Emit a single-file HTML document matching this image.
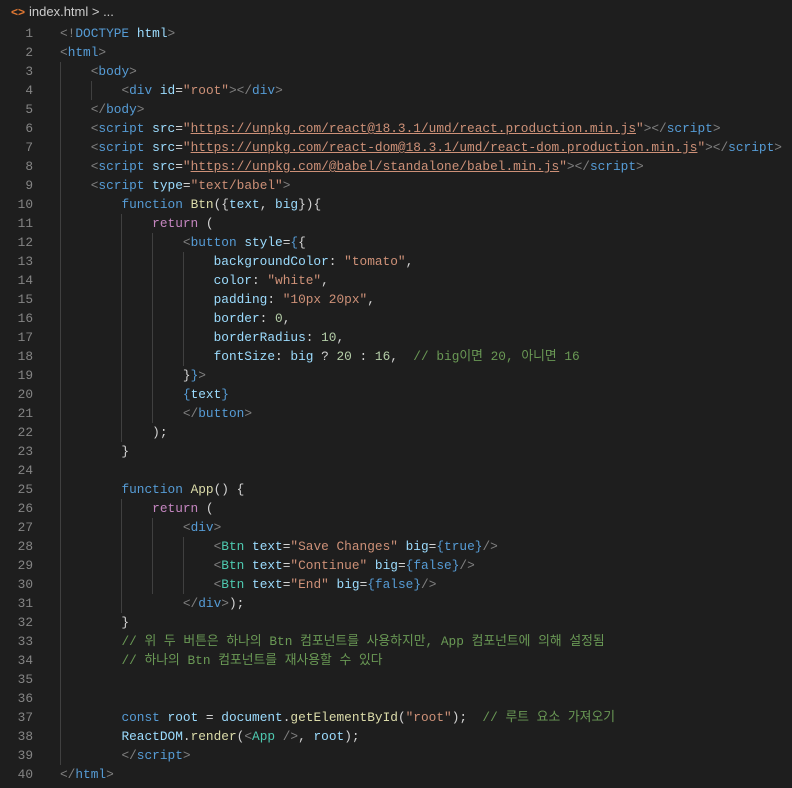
<!DOCTYPE html>
<html><head><meta charset="utf-8"><style>
body{margin:0;background:#1e1e1e;width:792px;height:788px;overflow:hidden;position:relative;font-family:"Liberation Mono","Noto Sans CJK KR",monospace;font-size:12.8px;color:#d4d4d4}
.bc{position:absolute;left:0;top:0;height:24px;width:792px;font-family:"Liberation Sans",sans-serif;font-size:13px;color:#cccccc;line-height:24px}
.ln{position:absolute;left:0;width:33px;text-align:right;color:#858585;height:19px;line-height:19px}
.cd{position:absolute;left:60px;height:19px;line-height:19px;white-space:pre}
.g{position:absolute;width:1px;background:#404040}
.t{color:#569cd6}.p{color:#808080}.a{color:#9cdcfe}.s{color:#ce9178}.k{color:#c586c0}.f{color:#dcdcaa}.v{color:#9cdcfe}.c{color:#6a9955}.n{color:#b5cea8}.j{color:#4ec9b0}
.u{text-decoration:underline;text-decoration-color:#ce9178}
</style></head><body>
<div class="bc"><span style="position:absolute;left:11px;color:#e37933;font-weight:bold;font-size:12px">&lt;&gt;</span><span style="position:absolute;left:29px">index.html &gt; ...</span></div>
<div class="g" style="left:60px;top:62px;height:703px"></div>
<div class="g" style="left:91px;top:81px;height:19px"></div>
<div class="g" style="left:121px;top:214px;height:228px"></div>
<div class="g" style="left:152px;top:233px;height:190px"></div>
<div class="g" style="left:183px;top:252px;height:114px"></div>
<div class="g" style="left:121px;top:499px;height:114px"></div>
<div class="g" style="left:152px;top:518px;height:76px"></div>
<div class="g" style="left:183px;top:537px;height:57px"></div>
<div id="L"></div>
<script></script>
<div class="ln" style="top:24px">1</div><div class="cd" style="top:24px"><span class="p">&lt;!</span><span class="t">DOCTYPE</span> <span class="a">html</span><span class="p">&gt;</span></div>
<div class="ln" style="top:43px">2</div><div class="cd" style="top:43px"><span class="p">&lt;</span><span class="t">html</span><span class="p">&gt;</span></div>
<div class="ln" style="top:62px">3</div><div class="cd" style="top:62px">    <span class="p">&lt;</span><span class="t">body</span><span class="p">&gt;</span></div>
<div class="ln" style="top:81px">4</div><div class="cd" style="top:81px">        <span class="p">&lt;</span><span class="t">div</span> <span class="a">id</span>=<span class="s">"root"</span><span class="p">&gt;&lt;/</span><span class="t">div</span><span class="p">&gt;</span></div>
<div class="ln" style="top:100px">5</div><div class="cd" style="top:100px">    <span class="p">&lt;/</span><span class="t">body</span><span class="p">&gt;</span></div>
<div class="ln" style="top:119px">6</div><div class="cd" style="top:119px">    <span class="p">&lt;</span><span class="t">script</span> <span class="a">src</span>=<span class="s">"<span class="u">https://unpkg.com/react@18.3.1/umd/react.production.min.js</span>"</span><span class="p">&gt;&lt;/</span><span class="t">script</span><span class="p">&gt;</span></div>
<div class="ln" style="top:138px">7</div><div class="cd" style="top:138px">    <span class="p">&lt;</span><span class="t">script</span> <span class="a">src</span>=<span class="s">"<span class="u">https://unpkg.com/react-dom@18.3.1/umd/react-dom.production.min.js</span>"</span><span class="p">&gt;&lt;/</span><span class="t">script</span><span class="p">&gt;</span></div>
<div class="ln" style="top:157px">8</div><div class="cd" style="top:157px">    <span class="p">&lt;</span><span class="t">script</span> <span class="a">src</span>=<span class="s">"<span class="u">https://unpkg.com/@babel/standalone/babel.min.js</span>"</span><span class="p">&gt;&lt;/</span><span class="t">script</span><span class="p">&gt;</span></div>
<div class="ln" style="top:176px">9</div><div class="cd" style="top:176px">    <span class="p">&lt;</span><span class="t">script</span> <span class="a">type</span>=<span class="s">"text/babel"</span><span class="p">&gt;</span></div>
<div class="ln" style="top:195px">10</div><div class="cd" style="top:195px">        <span class="t">function</span> <span class="f">Btn</span>({<span class="v">text</span>, <span class="v">big</span>}){</div>
<div class="ln" style="top:214px">11</div><div class="cd" style="top:214px">            <span class="k">return</span> (</div>
<div class="ln" style="top:233px">12</div><div class="cd" style="top:233px">                <span class="p">&lt;</span><span class="t">button</span> <span class="a">style</span>=<span class="t">{</span>{</div>
<div class="ln" style="top:252px">13</div><div class="cd" style="top:252px">                    <span class="v">backgroundColor</span>: <span class="s">"tomato"</span>,</div>
<div class="ln" style="top:271px">14</div><div class="cd" style="top:271px">                    <span class="v">color</span>: <span class="s">"white"</span>,</div>
<div class="ln" style="top:290px">15</div><div class="cd" style="top:290px">                    <span class="v">padding</span>: <span class="s">"10px 20px"</span>,</div>
<div class="ln" style="top:309px">16</div><div class="cd" style="top:309px">                    <span class="v">border</span>: <span class="n">0</span>,</div>
<div class="ln" style="top:328px">17</div><div class="cd" style="top:328px">                    <span class="v">borderRadius</span>: <span class="n">10</span>,</div>
<div class="ln" style="top:347px">18</div><div class="cd" style="top:347px">                    <span class="v">fontSize</span>: <span class="v">big</span> ? <span class="n">20</span> : <span class="n">16</span>,  <span class="c">// big이면 20, 아니면 16</span></div>
<div class="ln" style="top:366px">19</div><div class="cd" style="top:366px">                }<span class="t">}</span><span class="p">&gt;</span></div>
<div class="ln" style="top:385px">20</div><div class="cd" style="top:385px">                <span class="t">{</span><span class="v">text</span><span class="t">}</span></div>
<div class="ln" style="top:404px">21</div><div class="cd" style="top:404px">                <span class="p">&lt;/</span><span class="t">button</span><span class="p">&gt;</span></div>
<div class="ln" style="top:423px">22</div><div class="cd" style="top:423px">            );</div>
<div class="ln" style="top:442px">23</div><div class="cd" style="top:442px">        }</div>
<div class="ln" style="top:461px">24</div>
<div class="ln" style="top:480px">25</div><div class="cd" style="top:480px">        <span class="t">function</span> <span class="f">App</span>() {</div>
<div class="ln" style="top:499px">26</div><div class="cd" style="top:499px">            <span class="k">return</span> (</div>
<div class="ln" style="top:518px">27</div><div class="cd" style="top:518px">                <span class="p">&lt;</span><span class="t">div</span><span class="p">&gt;</span></div>
<div class="ln" style="top:537px">28</div><div class="cd" style="top:537px">                    <span class="p">&lt;</span><span class="j">Btn</span> <span class="a">text</span>=<span class="s">"Save Changes"</span> <span class="a">big</span>=<span class="t">{true}</span><span class="p">/&gt;</span></div>
<div class="ln" style="top:556px">29</div><div class="cd" style="top:556px">                    <span class="p">&lt;</span><span class="j">Btn</span> <span class="a">text</span>=<span class="s">"Continue"</span> <span class="a">big</span>=<span class="t">{false}</span><span class="p">/&gt;</span></div>
<div class="ln" style="top:575px">30</div><div class="cd" style="top:575px">                    <span class="p">&lt;</span><span class="j">Btn</span> <span class="a">text</span>=<span class="s">"End"</span> <span class="a">big</span>=<span class="t">{false}</span><span class="p">/&gt;</span></div>
<div class="ln" style="top:594px">31</div><div class="cd" style="top:594px">                <span class="p">&lt;/</span><span class="t">div</span><span class="p">&gt;</span>);</div>
<div class="ln" style="top:613px">32</div><div class="cd" style="top:613px">        }</div>
<div class="ln" style="top:632px">33</div><div class="cd" style="top:632px">        <span class="c">// 위 두 버튼은 하나의 Btn 컴포넌트를 사용하지만, App 컴포넌트에 의해 설정됨</span></div>
<div class="ln" style="top:651px">34</div><div class="cd" style="top:651px">        <span class="c">// 하나의 Btn 컴포넌트를 재사용할 수 있다</span></div>
<div class="ln" style="top:670px">35</div>
<div class="ln" style="top:689px">36</div>
<div class="ln" style="top:708px">37</div><div class="cd" style="top:708px">        <span class="t">const</span> <span class="v">root</span> = <span class="v">document</span>.<span class="f">getElementById</span>(<span class="s">"root"</span>);  <span class="c">// 루트 요소 가져오기</span></div>
<div class="ln" style="top:727px">38</div><div class="cd" style="top:727px">        <span class="v">ReactDOM</span>.<span class="f">render</span>(<span class="p">&lt;</span><span class="j">App</span> <span class="p">/&gt;</span>, <span class="v">root</span>);</div>
<div class="ln" style="top:746px">39</div><div class="cd" style="top:746px">        <span class="p">&lt;/</span><span class="t">script</span><span class="p">&gt;</span></div>
<div class="ln" style="top:765px">40</div><div class="cd" style="top:765px"><span class="p">&lt;/</span><span class="t">html</span><span class="p">&gt;</span></div>
</body></html>
